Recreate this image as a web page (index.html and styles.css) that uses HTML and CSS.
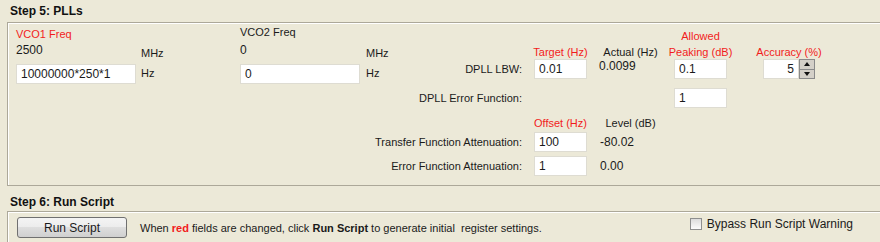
FILE: index.html
```html
<!DOCTYPE html>
<html lang="en">
<head>
    <meta charset="UTF-8">
    <title>PLL Setup</title>
    <link rel="stylesheet" href="styles.css">
</head>
<body>
    <h2 class="step-title">Step 5: PLLs</h2>
    <div class="panel panel-plls">
        <div class="vco-grid">
            <div class="field-label red c1">VCO1 Freq</div>
            <div class="field-label field-label-high c3">VCO2 Freq</div>
            <div class="value c1">2500</div>
            <div class="unit unit-mhz c2">MHz</div>
            <div class="value c3">0</div>
            <div class="unit unit-mhz unit-right c4">MHz</div>
            <input class="text-input vco-input c1" type="text" value="10000000*250*1">
            <div class="unit unit-hz c2">Hz</div>
            <input class="text-input vco-input c3" type="text" value="0">
            <div class="unit unit-hz unit-right c4">Hz</div>
        </div>

        <div class="dpll-grid">
            <div class="head red c4"><span>Allowed</span></div>

            <div class="head red c2"><span>Target (Hz)</span></div>
            <div class="head head-wide c3"><span>Actual (Hz)</span></div>
            <div class="head red c4"><span>Peaking (dB)</span></div>
            <div class="head head-acc red c5"><span>Accuracy (%)</span></div>

            <div class="row-label">DPLL LBW:</div>
            <input class="text-input dpll-input c2" type="text" value="0.01">
            <div class="dpll-value dpll-value-top c3">0.0099</div>
            <input class="text-input dpll-input c4" type="text" value="0.1">
            <div class="spin c5">
                <input class="text-input spin-input" type="text" value="5">
                <div class="spin-buttons">
                    <span class="spin-btn"><i class="arrow-up"></i></span>
                    <span class="spin-btn"><i class="arrow-down"></i></span>
                </div>
            </div>

            <div class="row-label">DPLL Error Function:</div>
            <input class="text-input dpll-input c4" type="text" value="1">

            <div class="head red c2"><span>Offset (Hz)</span></div>
            <div class="head head-wide c3"><span>Level (dB)</span></div>

            <div class="row-label">Transfer Function Attenuation:</div>
            <input class="text-input dpll-input c2" type="text" value="100">
            <div class="dpll-value c3">-80.02</div>

            <div class="row-label">Error Function Attenuation:</div>
            <input class="text-input dpll-input c2" type="text" value="1">
            <div class="dpll-value c3">0.00</div>
        </div>
    </div>

    <h2 class="step-title step-title-run">Step 6: Run Script</h2>
    <div class="panel panel-run">
        <button class="run-button" type="button">Run Script</button>
        <p class="run-note">When <b class="red">red</b> fields are changed, click <b>Run Script</b> to generate initial&nbsp; register settings.</p>
        <label class="bypass">
            <input class="bypass-check" type="checkbox">
            Bypass Run Script Warning
        </label>
    </div>
</body>
</html>
```

FILE: styles.css
```css
body {
    margin: 0;
    background-color: #ece9d8;
    font-family: "Liberation Sans", Arial, sans-serif;
    font-size: 11px;
    color: #1a1a1a;
    overflow: hidden;
}
.red {
    color: #f21c1c;
}
.c1 { grid-column: 1; }
.c2 { grid-column: 2; }
.c3 { grid-column: 3; }
.c4 { grid-column: 4; }
.c5 { grid-column: 5; }

.step-title {
    margin: 0 0 3px;
    padding: 4px 0 0 10px;
    font-size: 12px;
    line-height: 15px;
    font-weight: bold;
    color: #111;
}
.step-title-run {
    margin: 5px 0 1px;
}
.panel {
    margin-left: 7px;
    margin-right: -20px;
    border: 1px solid #aca899;
    box-shadow: inset 1px 1px 0 #fff;
}
.panel-plls {
    display: flex;
    padding: 0 0 9px 8px;
}

/* VCO columns */
.vco-grid {
    flex: none;
    width: 374px;
    display: grid;
    grid-template-columns: 120px 104px 120px 30px;
    grid-template-rows: 20px 14px 27px;
}
.field-label {
    align-self: start;
    padding-top: 4px;
    line-height: 14px;
}
.field-label-high {
    padding-top: 2px;
}
.value {
    font-size: 12px;
    line-height: 14px;
}
.unit {
    padding-left: 5px;
    line-height: 14px;
    white-space: nowrap;
}
.unit-right {
    padding-left: 6px;
}
.unit-mhz {
    padding-top: 3px;
}
.unit-hz {
    align-self: end;
    line-height: 18px;
    padding-bottom: 2px;
}
.text-input {
    box-sizing: border-box;
    height: 20px;
    margin: 0;
    padding: 0 4px;
    border: 1px solid #dedcd2;
    background: #fff;
    font-family: "Liberation Sans", Arial, sans-serif;
    font-size: 12px;
    color: #1a1a1a;
    outline: none;
}
.vco-input {
    width: 120px;
    align-self: end;
}

/* DPLL table */
.dpll-grid {
    display: grid;
    grid-template-columns: 144px 65px 75px 82px 66px;
    grid-template-rows: 20px 16px 20px 29px 22px 22px 24px;
}
.head {
    align-self: end;
    width: 53px;
    display: flex;
    justify-content: center;
    white-space: nowrap;
    line-height: 14px;
}
.head-wide {
    width: 63px;
}
.head-acc {
    width: 66px;
}
.row-label {
    grid-column: 1;
    align-self: end;
    display: flex;
    justify-content: flex-end;
    padding-right: 12px;
    line-height: 20px;
    white-space: nowrap;
}
.dpll-input {
    width: 53px;
    align-self: end;
}
.dpll-value {
    align-self: end;
    padding-left: 1px;
    font-size: 12px;
    line-height: 20px;
}
.dpll-value-top {
    align-self: start;
    padding-left: 0;
    line-height: 14px;
}
.spin {
    align-self: end;
    display: flex;
    height: 20px;
    margin-left: 7px;
}
.spin-input {
    width: 36px;
    text-align: right;
    padding-right: 4px;
}
.spin-buttons {
    box-sizing: border-box;
    width: 16px;
    display: flex;
    flex-direction: column;
    border: 1px solid #8a8a8a;
    background: #d4d0c8;
}
.spin-btn {
    flex: 1;
    display: flex;
    align-items: center;
    justify-content: center;
}
.spin-btn + .spin-btn {
    border-top: 1px solid #8a8a8a;
}
.arrow-up, .arrow-down {
    width: 0;
    height: 0;
    border-left: 3px solid transparent;
    border-right: 3px solid transparent;
}
.arrow-up {
    border-bottom: 4px solid #111;
}
.arrow-down {
    border-top: 4px solid #111;
}

/* Run script */
.panel-run {
    display: flex;
    align-items: center;
    padding: 5px 46px 10px 9px;
}
.run-button {
    flex: none;
    width: 110px;
    height: 21px;
    padding: 0;
    border: 1px solid #707070;
    border-radius: 3px;
    background: linear-gradient(#f4f4f4, #ececec 50%, #dedede 50%, #d0d0d0);
    font-family: "Liberation Sans", Arial, sans-serif;
    font-size: 12px;
    color: #1a1a1a;
}
.run-note {
    margin: 0 0 0 13px;
    font-size: 11px;
    white-space: nowrap;
}
.bypass {
    margin-left: auto;
    align-self: flex-start;
    display: flex;
    align-items: center;
    gap: 5px;
    font-size: 12px;
    line-height: 14px;
    white-space: nowrap;
}
.bypass-check {
    appearance: none;
    box-sizing: border-box;
    width: 12px;
    height: 12px;
    margin: 0;
    border: 1px solid #8e8f8f;
    background: linear-gradient(#dcdcdc, #fbfbfb);
}
```
